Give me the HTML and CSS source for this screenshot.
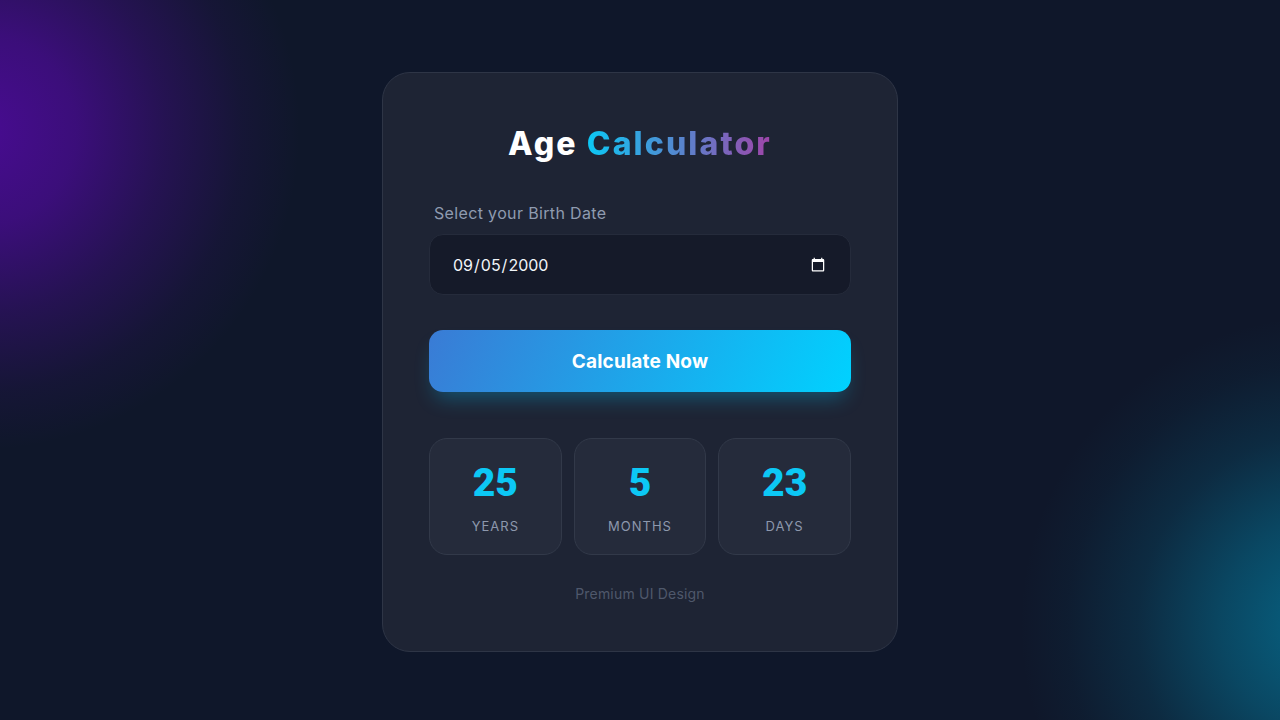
FILE: index.html
```html
<!DOCTYPE html>
<html lang="en">
<head>
    <meta charset="UTF-8">
    <meta name="viewport" content="width=device-width, initial-scale=1.0">
    <title>Age Calculator</title>
    <link rel="stylesheet" href="styles.css">
</head>
<body>

    <div class="card">
        <h1 class="title">Age <span class="title-accent">Calculator</span></h1>

        <label class="field-label" for="birthDate">Select your Birth Date</label>
        <input class="date-input" type="date" id="birthDate" value="2000-09-05">

        <button class="calc-button">Calculate Now</button>

        <div class="results">
            <div class="result-box">
                <div class="result-value">25</div>
                <div class="result-unit">Years</div>
            </div>
            <div class="result-box">
                <div class="result-value">5</div>
                <div class="result-unit">Months</div>
            </div>
            <div class="result-box">
                <div class="result-value">23</div>
                <div class="result-unit">Days</div>
            </div>
        </div>

        <p class="footer-note">Premium UI Design</p>
    </div>

</body>
</html>
```

FILE: styles.css
```css
* {
    box-sizing: border-box;
}

body {
    font-family: Inter, "Open Sans", sans-serif;
    background-color: #0f172a;
    background-image:
        radial-gradient(circle 320px at -20px 130px, rgba(80, 10, 160, 0.88), rgba(80, 10, 160, 0.68) 30%, rgba(80, 10, 160, 0.34) 58%, rgba(80, 10, 160, 0.1) 82%, rgba(80, 10, 160, 0) 100%),
        radial-gradient(circle 310px at 1330px 625px, rgba(5, 115, 150, 0.85), rgba(5, 115, 150, 0.52) 35%, rgba(5, 115, 150, 0.22) 62%, rgba(5, 115, 150, 0.06) 85%, rgba(5, 115, 150, 0) 100%);
    margin: 0;
    padding-top: 4px;
    height: 100vh;
    display: flex;
    align-items: center;
    justify-content: center;
    overflow: hidden;
}

.card {
    width: 516px;
    height: 580px;
    padding: 46px;
    background-color: #1e2434;
    border: 1px solid #2e3546;
    border-radius: 28px;
    display: flex;
    flex-direction: column;
}

.title {
    margin: 3px 0 0;
    font-size: 32px;
    line-height: 44px;
    font-weight: 800;
    letter-spacing: 2.1px;
    text-align: center;
    color: #fff;
}

.title-accent {
    background: linear-gradient(90deg, #0cc8f5, #a044a8);
    -webkit-background-clip: text;
    background-clip: text;
    color: transparent;
}

.field-label {
    margin: 35px 0 0 5px;
    font-size: 16px;
    line-height: 24px;
    letter-spacing: 0.35px;
    color: #8f9bb0;
}

.date-input {
    width: 100%;
    height: 61px;
    margin-top: 9px;
    padding: 0 22px;
    font-family: inherit;
    font-size: 16px;
    color: #f1f5f9;
    color-scheme: dark;
    background-color: #151a29;
    border: 1px solid #252b3b;
    border-radius: 14px;
}

.calc-button {
    width: 100%;
    height: 62px;
    margin-top: 35px;
    font-family: inherit;
    font-size: 19px;
    font-weight: 700;
    letter-spacing: 0.2px;
    color: #fff;
    cursor: pointer;
    background: linear-gradient(115deg, #3a7bd5, #00d2ff);
    border: none;
    border-radius: 14px;
    box-shadow: 0 12px 20px -6px rgba(0, 198, 255, 0.3);
}

.results {
    display: grid;
    grid-template-columns: repeat(3, 1fr);
    gap: 12px;
    margin-top: 46px;
}

.result-box {
    height: 117px;
    padding-top: 22px;
    text-align: center;
    background-color: #252b3b;
    border: 1px solid #323949;
    border-radius: 18px;
}

.result-value {
    font-family: Roboto, sans-serif;
    font-size: 39px;
    line-height: 44px;
    font-weight: 900;
    color: #0cc8f5;
}

.result-unit {
    margin-top: 11px;
    font-size: 13px;
    line-height: 20px;
    letter-spacing: 1px;
    text-transform: uppercase;
    color: #8d98ad;
}

.footer-note {
    margin: 28px 0 0;
    font-size: 14px;
    line-height: 22px;
    letter-spacing: 0.2px;
    text-align: center;
    color: #4f586b;
}
```
